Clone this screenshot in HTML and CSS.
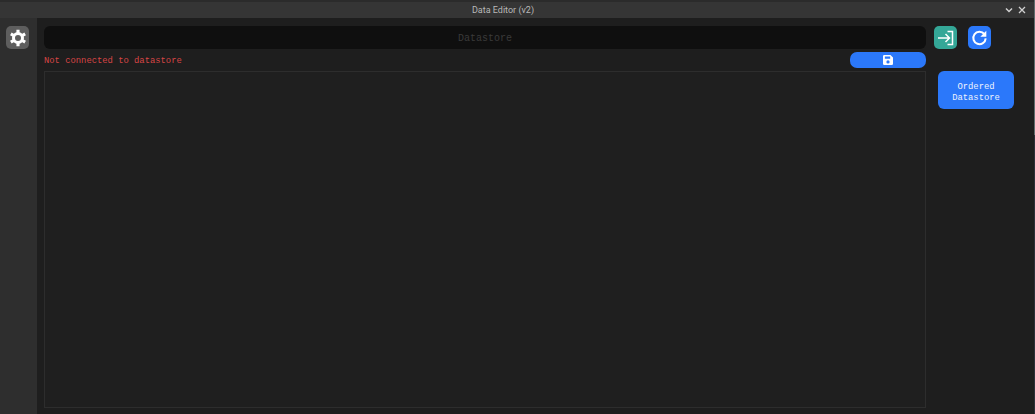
FILE: index.html
```html
<!DOCTYPE html>
<html lang="en">
<head>
<meta charset="utf-8">
<title>Data Editor (v2)</title>
<link rel="stylesheet" href="styles.css">
</head>
<body>
<div class="window">
  <header class="titlebar">
    <span class="title">Data Editor (v2)</span>
    <div class="window-controls">
      <svg class="ctl" viewBox="0 0 10 10" width="10" height="10"><path d="M2 3.500 5 6.500 8 3.500" fill="none" stroke="#d0d0d0" stroke-width="1.500"/></svg>
      <svg class="ctl" viewBox="0 0 10 10" width="10" height="10"><path d="M2 2 8 8M8 2 2 8" fill="none" stroke="#d0d0d0" stroke-width="1.300"/></svg>
    </div>
  </header>
  <div class="body">
    <aside class="sidebar">
      <button class="icon-btn settings" aria-label="Settings">
        <svg viewBox="0 0 24 24" width="18" height="18"><circle cx="12" cy="12" r="6" fill="none" stroke="#fff" stroke-width="4"/><path d="M12 1v5M12 18v5M2.470 6.500l4.330 2.500M17.200 15l4.330 2.500M2.470 17.500l4.330-2.500M17.200 9l4.330-2.500" stroke="#fff" stroke-width="4.200"/></svg>
      </button>
    </aside>
    <main class="main">
      <div class="editor-col">
        <div class="datastore-input">Datastore</div>
        <div class="status-row">
          <span class="status">Not connected to datastore</span>
          <button class="save" aria-label="Save">
            <svg viewBox="0 0 16 16" width="10" height="10"><path fill="#fff" fill-rule="evenodd" d="M2 0h10l4 4v10a2 2 0 0 1-2 2H2a2 2 0 0 1-2-2V2a2 2 0 0 1 2-2zm1 2.500v3.500h8.500V2.500zM8 8.500a2.600 2.600 0 1 0 0 5.200 2.600 2.600 0 0 0 0-5.200z"/></svg>
          </button>
        </div>
        <div class="editor"></div>
      </div>
      <div class="side-col">
        <div class="actions">
          <button class="icon-btn connect" aria-label="Connect">
            <svg viewBox="0 0 23 23" width="23" height="23"><path d="M13.500 5.500h5v13h-5" fill="none" stroke="#fff" stroke-width="1.500"/><path d="M4 12h11M11.500 8l4 4-4 4" fill="none" stroke="#fff" stroke-width="1.500"/></svg>
          </button>
          <button class="icon-btn refresh" aria-label="Refresh">
            <svg viewBox="0 0 23 23" width="23" height="23"><path d="M16.300 8a6.200 6.200 0 1 0 1.400 4.400" fill="none" stroke="#fff" stroke-width="2"/><path fill="#fff" d="M18.300 4.800v6h-6z"/></svg>
          </button>
        </div>
        <button class="ordered">Ordered<br>Datastore</button>
      </div>
    </main>
  </div>
</div>
</body>
</html>
```

FILE: styles.css
```css
* { box-sizing: border-box; }
html, body { margin: 0; height: 100%; }
body { background: #1e1e1e; overflow: hidden; }
button { border: 0; padding: 0; margin: 0; font: inherit; }

.window { position: relative; width: 1035px; height: 414px; display: flex; flex-direction: column; }
.window::after {
  content: "";
  position: absolute;
  top: 0; right: 0; bottom: 0;
  width: 1px;
  background: linear-gradient(#5f6b6c 0, #5f6b6c 135px, #2c3038 135px);
}

.titlebar {
  position: relative;
  height: 18px;
  flex: none;
  background: #353535;
  border-top: 2px solid #2b2b2b;
  display: flex;
  align-items: center;
  justify-content: flex-end;
  padding-right: 8px;
}
.title {
  position: absolute;
  left: 0;
  width: 1006px;
  text-align: center;
  font: 9px/16px Roboto, sans-serif;
  color: #b8b8b8;
}
.window-controls { display: flex; gap: 3px; }
.ctl { display: block; }

.body { flex: 1; display: flex; min-height: 0; }

.sidebar { width: 37px; flex: none; background: #2e2e2e; padding: 8px 0 0 6px; }

.icon-btn {
  width: 23px; height: 23px;
  border-radius: 5px;
  display: flex; align-items: center; justify-content: center;
}
.settings { background: #5e5e5e; }
.connect { background: #34a797; }
.refresh { background: #2b78fa; }

.main { flex: 1; display: flex; padding: 8px 0 6px 7px; min-width: 0; }

.editor-col { width: 882px; flex: none; display: flex; flex-direction: column; }

.datastore-input {
  height: 23px;
  background: #0f0f0f;
  border-radius: 6px;
  text-align: center;
  font: 10px/25px "Liberation Mono", monospace;
  color: #3a3a3a;
}

.status-row { height: 22px; display: flex; justify-content: space-between; padding-top: 3px; flex: none; }
.status {
  font: 8.830px/19px "Liberation Mono", monospace;
  color: #d84545;
  white-space: nowrap;
}
.save {
  width: 76px; height: 16px;
  background: #2b78fa;
  border-radius: 7px;
  display: flex; align-items: center; justify-content: center;
}
.save svg { display: block; }

.editor { flex: 1; border: 1px solid #2d2d2d; background: #1f1f1f; }

.side-col { flex: 1; padding-left: 8px; }
.actions { display: flex; gap: 11px; height: 45px; }
.ordered {
  display: block;
  margin-left: 4px;
  width: 76px; height: 38px;
  padding-top: 5px;
  background: #2b78fa;
  border-radius: 6px;
  font: 8.830px/11px "Liberation Mono", monospace;
  color: #eef3fd;
  text-align: center;
}
```
